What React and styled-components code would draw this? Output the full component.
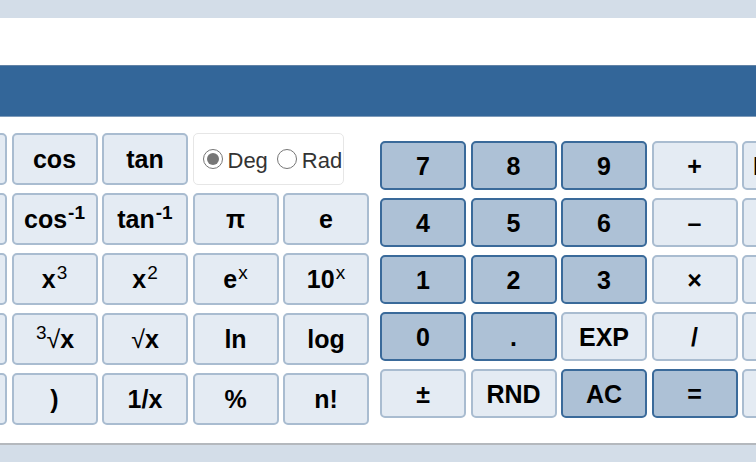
import React from "react";
import styled, { createGlobalStyle, css } from "styled-components";

const Global = createGlobalStyle`
  html, body { margin: 0; padding: 0; background: #ffffff; overflow: hidden; }
  #root { width: 756px; height: 462px; }
`;

const Page = styled.div`
  width: 756px;
  height: 462px;
  display: flex;
  flex-direction: column;
  background: #d3dde8;
  font-family: "Liberation Sans", Arial, sans-serif;
  overflow: hidden;
`;

const TopBand = styled.div`
  height: 18px;
  flex: none;
  background: #d3dde8;
`;

const Display = styled.div`
  height: 47px;
  flex: none;
  background: #ffffff;
`;

const ResultBar = styled.div`
  height: 50px;
  flex: none;
  background: #336699;
  border-top: 1px solid #6283a6;
  border-bottom: 1px solid #7e9bba;
`;

const Keypad = styled.div`
  height: 326px;
  flex: none;
  background: #ffffff;
  display: flex;
  align-items: flex-start;
  gap: 11px;
  overflow: hidden;
  border-bottom: 2px solid #b4b8bd;
`;

const FuncGrid = styled.div`
  margin-left: -79px;
  margin-top: 16px;
  display: grid;
  grid-template-columns: repeat(5, 86px);
  grid-auto-rows: 52px;
  column-gap: 4.5px;
  row-gap: 8px;
  flex: none;
`;

const NumGrid = styled.div`
  margin-top: 24px;
  display: grid;
  grid-template-columns: repeat(5, 86px);
  grid-auto-rows: 49px;
  column-gap: 4.5px;
  row-gap: 8px;
  flex: none;
`;

const Key = styled.div`
  box-sizing: border-box;
  display: flex;
  align-items: center;
  justify-content: center;
  border-radius: 5px;
  font-weight: bold;
  font-size: 25px;
  color: #000;
  white-space: nowrap;
  ${(p) =>
    p.$dark
      ? css`
          background: #adc1d6;
          border: 2px solid #3a6a9a;
        `
      : css`
          background: #e4ebf3;
          border: 2px solid #a9bcd0;
        `}
`;

const Label = styled.span`
  display: inline-block;
  line-height: 28px;
  margin-left: ${(p) => p.$shift || 0}px;
`;

const Sup = styled.span`
  font-size: 19px;
  line-height: 0;
  position: relative;
  top: -9px;
  margin-left: 1px;
  font-weight: ${(p) => (p.$bold ? "bold" : "normal")};
`;

const Thin = styled.span`
  font-weight: normal;
`;

const AngleBox = styled.div`
  grid-column: span 2;
  box-sizing: border-box;
  width: 151px;
  height: 52px;
  background: #ffffff;
  border: 1px solid #e6e6e6;
  border-radius: 5px;
  display: flex;
  align-items: center;
  padding-left: 9px;
  padding-top: 3px;
  font-size: 22px;
  color: #333;
`;

const Radio = styled.span`
  box-sizing: border-box;
  width: 20px;
  height: 20px;
  border-radius: 50%;
  border: 1.5px solid #767676;
  background: #ffffff;
  margin-right: 5px;
  margin-left: ${(p) => (p.$first ? "0" : "9px")};
  margin-top: -3px;
  display: inline-flex;
  align-items: center;
  justify-content: center;
  flex: none;
  &::after {
    content: "";
    width: 12px;
    height: 12px;
    border-radius: 50%;
    background: ${(p) => (p.$checked ? "#767676" : "transparent")};
  }
`;

const funcRows = [
  [null, "cos", "tan"],
  [
    null,
    <>cos<Sup $bold>-1</Sup></>,
    <>tan<Sup $bold>-1</Sup></>,
    "π",
    "e",
  ],
  [
    null,
    <>x<Sup>3</Sup></>,
    <>x<Sup>2</Sup></>,
    <>e<Sup>x</Sup></>,
    <>10<Sup>x</Sup></>,
  ],
  [
    null,
    <><Sup>3</Sup><Thin>√</Thin>x</>,
    <><Thin>√</Thin>x</>,
    "ln",
    "log",
  ],
  [null, ")", "1/x", "%", "n!"],
];

const numKeys = [
  ["7", true], ["8", true], ["9", true], ["+", false], ["Back", false, -4],
  ["4", true], ["5", true], ["6", true], ["–", false], [null, false],
  ["1", true], ["2", true], ["3", true], ["×", false], [null, false],
  ["0", true], [".", true], ["EXP", false], ["/", false], [null, false],
  ["±", false], ["RND", false], ["AC", true], ["=", true], [null, false],
];

export default function App() {
  return (
    <>
      <Global />
      <Page>
        <TopBand />
        <Display />
        <ResultBar />
        <Keypad>
          <FuncGrid>
            {funcRows.map((row, r) => (
              <React.Fragment key={r}>
                {row.map((label, i) => (
                  <Key key={i}>{label && <Label>{label}</Label>}</Key>
                ))}
                {r === 0 && (
                  <AngleBox>
                    <Radio $first $checked />
                    Deg
                    <Radio />
                    Rad
                  </AngleBox>
                )}
              </React.Fragment>
            ))}
          </FuncGrid>
          <NumGrid>
            {numKeys.map(([label, dark, shift], i) => (
              <Key key={i} $dark={dark}>
                {label && <Label $shift={shift}>{label}</Label>}
              </Key>
            ))}
          </NumGrid>
        </Keypad>
      </Page>
    </>
  );
}
